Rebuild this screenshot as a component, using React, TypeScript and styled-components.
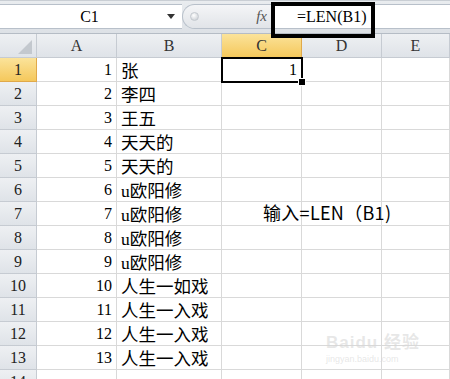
import styled, { createGlobalStyle } from 'styled-components';

const GlobalStyle = createGlobalStyle`
  html, body {
    margin: 0;
    padding: 0;
    background: #ffffff;
  }
  body {
    width: 450px;
    height: 379px;
    overflow: hidden;
    font-family: "Liberation Serif", "Noto Sans CJK SC", serif;
  }
`;

const Sheet = styled.div`
  position: relative;
  width: 450px;
  height: 379px;
  overflow: hidden;
  background: #ffffff;
`;

const FormulaBar = styled.div`
  height: 34px;
  box-sizing: border-box;
  padding-top: 3px;
  background: linear-gradient(#e9ecef, #dde1e6);
  border-top: 1px solid #c9ced4;
  border-bottom: 1px solid #b5bcc5;
  display: flex;
  align-items: flex-start;
`;

const NameBox = styled.div`
  width: 182px;
  height: 25px;
  box-sizing: border-box;
  background: #ffffff;
  border-top: 1px solid #b8c0ca;
  border-bottom: 1px solid #b8c0ca;
  display: flex;
  align-items: center;
  font-size: 16px;
  color: #000;
`;

const NameText = styled.span`
  flex: 1;
  text-align: center;
  padding-left: 12px;
`;

const DropArrow = styled.span`
  width: 0;
  height: 0;
  margin-right: 7px;
  border-left: 4px solid transparent;
  border-right: 4px solid transparent;
  border-top: 5px solid #333;
`;

const Grip = styled.div`
  width: 90px;
  height: 25px;
  box-sizing: border-box;
  border: 1px solid #b8c0ca;
  border-right: none;
  border-radius: 13px 0 0 13px;
  background: linear-gradient(#f4f5f7, #e1e4e8);
  display: flex;
  align-items: center;
  justify-content: space-between;
  padding: 0 5px 0 7px;
`;

const GripDot = styled.span`
  width: 7px;
  height: 7px;
  border-radius: 50%;
  background: radial-gradient(circle at 40% 35%, #ffffff, #c3c8cf);
  border: 1px solid #c4c9cf;
`;

const Fx = styled.span`
  font-family: "Liberation Serif", serif;
  font-style: italic;
  font-size: 15px;
  color: #555;
`;

const FormulaInput = styled.div`
  flex: 1;
  height: 25px;
  box-sizing: border-box;
  background: #ffffff;
  border: 1px solid #b8c0ca;
  border-right: none;
  display: flex;
  align-items: center;
  padding-left: 24px;
  font-size: 16px;
  color: #000;
`;

const Grid = styled.div`
  display: grid;
  grid-template-columns: 37px 80px 105px 80px 80px 1fr;
  grid-auto-rows: 24px;
`;

const Header = styled.div<{ $active?: boolean }>`
  box-sizing: border-box;
  border-right: 1px solid ${(p) => (p.$active ? '#e0a94a' : '#c6cbd2')};
  border-bottom: 1px solid ${(p) => (p.$active ? '#e0a94a' : '#c6cbd2')};
  background: ${(p) =>
    p.$active ? 'linear-gradient(#fbe39a, #f5c85c)' : 'linear-gradient(#eef0f3, #dfe3e8)'};
  display: flex;
  align-items: center;
  justify-content: center;
  font-size: 16px;
  color: #333;
  position: relative;
`;

const CornerMark = styled.span`
  position: absolute;
  right: 4px;
  bottom: 3px;
  width: 0;
  height: 0;
  border-left: 14px solid transparent;
  border-bottom: 14px solid #c3c8ce;
`;

const RowHead = styled(Header)`
  color: #222;
`;

const Cell = styled.div<{ $num?: boolean }>`
  box-sizing: border-box;
  border-right: 1px solid #d9d9d9;
  border-bottom: 1px solid #d9d9d9;
  display: flex;
  align-items: center;
  justify-content: ${(p) => (p.$num ? 'flex-end' : 'flex-start')};
  padding: 0 4px;
  font-size: ${(p) => (p.$num ? '16px' : '17.5px')};
  color: #000;
  white-space: nowrap;
  position: relative;
`;

const Selected = styled(Cell)`
  outline: 2px solid #000;
  outline-offset: -1px;
  z-index: 1;
`;

const FillHandle = styled.span`
  position: absolute;
  right: -5px;
  bottom: -5px;
  width: 6px;
  height: 6px;
  background: #000;
  border: 1px solid #fff;
`;

const Annotation = styled.div`
  position: absolute;
  left: 263px;
  top: 199px;
  font-family: "Noto Sans CJK SC", "Liberation Sans", sans-serif;
  font-size: 18px;
  color: #000;
  letter-spacing: 0.3px;
`;

const Highlight = styled.div`
  position: absolute;
  left: 271px;
  top: 2px;
  width: 104px;
  height: 36px;
  box-sizing: border-box;
  border: 4px solid #000;
  z-index: 3;
`;

const Watermark = styled.div`
  position: absolute;
  left: 326px;
  top: 334px;
  color: rgba(215, 215, 215, 0.6);
  font-family: "Liberation Sans", "Noto Sans CJK SC", sans-serif;
  line-height: 1;
  z-index: 2;
`;

const MarkTop = styled.div`
  font-size: 17px;
  font-weight: bold;
  letter-spacing: 1px;
`;

const MarkBottom = styled.div`
  font-size: 9px;
  margin-top: 4px;
`;

const cols = ['A', 'B', 'C', 'D', 'E'];

const rows: [number, string][] = [
  [1, '张'],
  [2, '李四'],
  [3, '王五'],
  [4, '天天的'],
  [5, '天天的'],
  [6, 'u欧阳修'],
  [7, 'u欧阳修'],
  [8, 'u欧阳修'],
  [9, 'u欧阳修'],
  [10, '人生一如戏'],
  [11, '人生一入戏'],
  [12, '人生一入戏'],
  [13, '人生一入戏'],
];

function Row({ n, text }: { n: number; text: string }) {
  return (
    <>
      <RowHead $active={n === 1}>{n}</RowHead>
      <Cell $num>{n}</Cell>
      <Cell>{text}</Cell>
      {n === 1 ? (
        <Selected $num>
          1
          <FillHandle />
        </Selected>
      ) : (
        <Cell />
      )}
      <Cell />
      <Cell />
    </>
  );
}

export default function App() {
  return (
    <Sheet>
      <GlobalStyle />
      <FormulaBar>
        <NameBox>
          <NameText>C1</NameText>
          <DropArrow />
        </NameBox>
        <Grip>
          <GripDot />
          <Fx>fx</Fx>
        </Grip>
        <FormulaInput>=LEN(B1)</FormulaInput>
      </FormulaBar>
      <Grid>
        <Header>
          <CornerMark />
        </Header>
        {cols.map((c) => (
          <Header key={c} $active={c === 'C'}>
            {c}
          </Header>
        ))}
        {rows.map(([n, text]) => (
          <Row key={n} n={n} text={text} />
        ))}
        <RowHead>14</RowHead>
        <Cell />
        <Cell />
        <Cell />
        <Cell />
        <Cell />
      </Grid>
      <Annotation>输入=LEN（B1)</Annotation>
      <Highlight />
      <Watermark>
        <MarkTop>Baidu 经验</MarkTop>
        <MarkBottom>jingyan.baidu.com</MarkBottom>
      </Watermark>
    </Sheet>
  );
}
